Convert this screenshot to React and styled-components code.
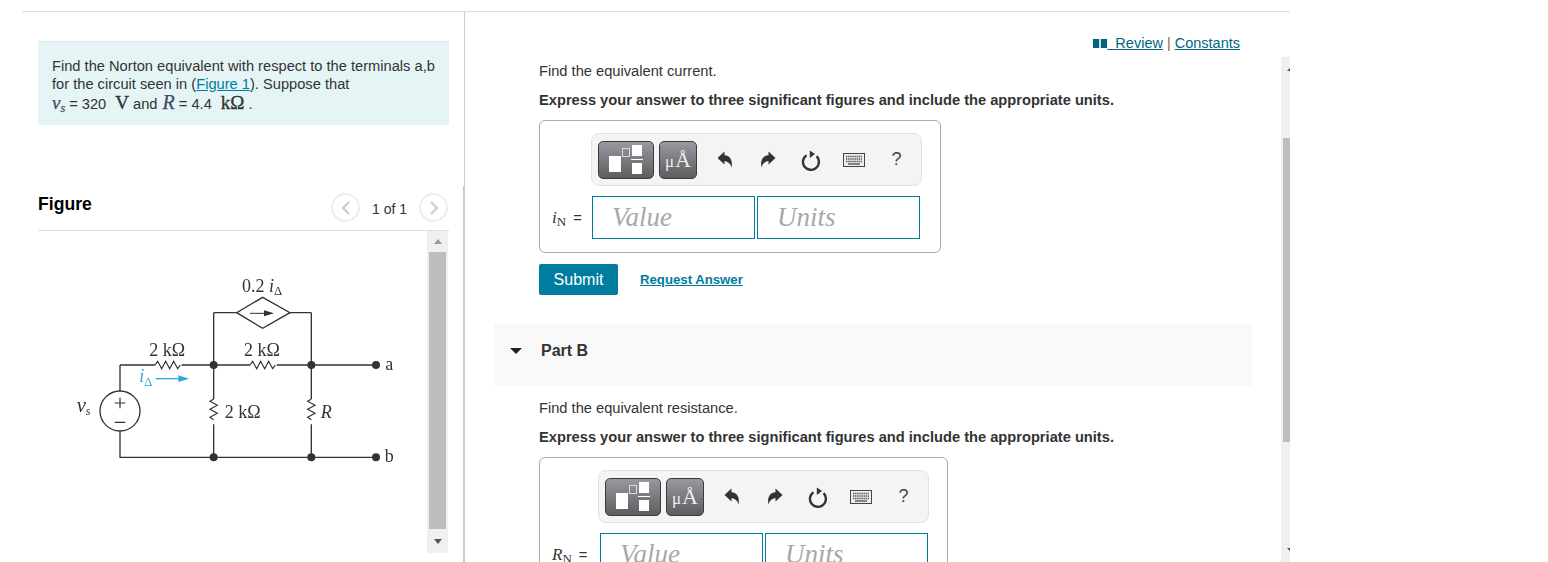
import React from "react";
import styled, { createGlobalStyle } from "styled-components";

const Global = createGlobalStyle`
  html, body { margin: 0; padding: 0; background: #fff; }
  body { font-family: "Liberation Sans", Arial, sans-serif; color: #333; font-size: 14.67px; }
`;

const Page = styled.div`
  width: 1548px; height: 562px; overflow: hidden; padding: 11px 258px 0 22px; box-sizing: border-box;
`;
const Frame = styled.div`
  display: flex; height: 551px; border-top: 1px solid #e0e0e0;
`;
const LeftColumn = styled.div`
  width: 442px; flex: none; padding: 29px 0 0 16px; box-sizing: border-box;
`;
const RightColumn = styled.div`
  flex: 1; min-width: 0; border-left: 1px solid #b9cfe3; display: flex; flex-direction: column;
`;
const Intro = styled.div`
  width: 411px; height: 84px; box-sizing: border-box; background: #e5f5f6; border-top: 1px solid #dfe6e6;
  padding: 15px 14px 0; line-height: 18px; white-space: nowrap;
`;
const TextLink = styled.a`
  color: #007c9e; text-decoration: underline;
`;
const MathI = styled.i`
  font-family: "Liberation Serif", "DejaVu Serif", serif; font-size: ${p => p.$size || 19}px; -webkit-text-stroke: 0.25px #3d4a66; color: #3d4a66; margin-left: ${p => p.$ml || 0}px;
`;
const MathR = styled.span`
  font-family: "Liberation Serif", "DejaVu Serif", serif; font-size: 19px; -webkit-text-stroke: 0.35px #333; margin: 0 4px 0 ${p => p.$ml || 9}px;
`;
const Sub = styled.sub`
  font-size: ${p => p.$size || 13}px; line-height: 0; vertical-align: -3px;
`;
const FigureSection = styled.section`
  margin-top: 61px; width: 426px; height: 376px; box-sizing: border-box; border-right: 1px solid #b9cfe3; padding-right: 15px;
`;
const FigureHeader = styled.header`
  height: 45px; box-sizing: border-box; border-bottom: 1px solid #ddd; display: flex; align-items: flex-start; padding: 7px 1px 0 0;
  margin-right: -1px;
`;
const FigureTitle = styled.h2`
  margin: 1px auto 0 0; font-size: 17.6px; line-height: 20px; font-weight: 700; color: #000;
`;
const PagerButton = styled.button`
  width: 29px; height: 29px; border-radius: 50%; border: 2px solid #eee; background: #fff; padding: 0;
  display: flex; align-items: center; justify-content: center; box-sizing: border-box;
`;
const PagerText = styled.span`
  width: 59px; text-align: center; line-height: 18px; margin-top: 7px; box-sizing: border-box; font-size: 14px;
`;
const FigureBody = styled.div`
  display: flex; justify-content: space-between; height: 322px;
`;
const CircuitSvg = styled.svg`
  width: 350px; height: 200px; margin: 34px 0 0 22px; flex: none; filter: blur(0.4px);
`;
const LeftScroll = styled.div`
  width: 21px; height: 322px; background: #f0f0f0; display: flex; flex-direction: column; align-items: center; justify-content: space-between;
  padding: 0 2px; box-sizing: border-box;
`;
const ScrollArrowBox = styled.div`
  height: ${p => p.$h}px; display: flex; align-items: center; justify-content: center;
`;
const Triangle = styled.div`
  width: 0; height: 0; border-left: 4.5px solid transparent; border-right: 4.5px solid transparent;
  ${p => p.$up ? `border-bottom: 5px solid ${p.$c};` : `border-top: 5px solid ${p.$c};`}
`;
const LeftThumb = styled.div`
  width: 17px; height: 277px; background: #bdbdbd;
`;
const ReviewRow = styled.div`
  height: 45px; box-sizing: border-box; display: flex; justify-content: flex-end; align-items: flex-start; padding: 22px 50px 0 0; line-height: 18px; font-size: 14.5px; color: #555;
`;
const ReviewLink = styled.a`
  color: #00667f; text-decoration: underline; display: inline-flex; align-items: center; white-space: pre;
`;
const ReviewSep = styled.span`
  margin: 0 4px; color: #8a6a3a;
`;
const ScrollRow = styled.div`
  flex: 1; min-height: 0; display: flex; justify-content: space-between; overflow: hidden;
`;
const Content = styled.div`
  width: 758px; margin-left: 29px; flex: none; padding-top: 5px;
`;
const RightScroll = styled.div`
  width: 9px; height: 505px; background: #f0f0f0; flex: none; display: flex; flex-direction: column; padding-left: 2px; box-sizing: border-box; position: relative;
`;
const RightThumb = styled.div`
  margin-top: 81px; width: 7px; height: 304px; background: #bdbdbd;
`;
const ClippedArrow = styled.div`
  position: absolute; right: 0; top: ${p => p.$top}px; width: 3px; height: 3px; overflow: hidden; background: #444;
  clip-path: ${p => p.$up ? "polygon(100% 0, 100% 100%, 0 100%)" : "polygon(0 0, 100% 0, 100% 100%)"};
`;
const Para = styled.p`
  margin: ${p => p.$mt || 0}px 0 0 45px; line-height: 18px;
`;
const Strong = styled(Para)`
  font-weight: 700; color: #333;
`;
const AnswerBox = styled.div`
  margin: 11px 0 0 45px; width: ${p => p.$w}px; box-sizing: border-box; border: 1px solid #aaa; border-radius: 6px;
  padding: 12px 0 13px 12px; display: grid; grid-template-columns: ${p => p.$labelW}px auto; justify-content: start; row-gap: 10px;
`;
const Toolbar = styled.div`
  grid-column: 2; margin-left: ${p => p.$shift}px; width: 331px; height: 53px; box-sizing: border-box; background: #f4f4f4; border: 1px solid #e2e2e2; border-radius: 8px;
  display: flex; align-items: center; padding: 0 0 0 6px;
`;
const DarkButton = styled.button`
  height: 38px; width: ${p => p.$w}px; margin-right: ${p => p.$mr || 0}px; padding: 0; box-sizing: border-box; border: 1px solid #3c3c3c; border-radius: 5px;
  background: linear-gradient(#9a98a0, #5d5d5f); display: flex; align-items: center; justify-content: center; flex: none;
  color: #eee; font-family: "Liberation Serif", serif; font-size: 22px;
`;
const Mu = styled.span`
  font-size: 17px; margin-top: 4px; margin-right: 1px;
`;
const IconSlot = styled.span`
  width: 43px; height: 38px; display: flex; align-items: center; justify-content: center; flex: none; color: #333; font-size: 17px;
`;
const Help = styled(IconSlot)`
  font-size: 18px; color: #444;
`;
const Label = styled.div`
  font-family: "Liberation Serif", serif; font-size: 17px; align-self: center; color: #333; white-space: nowrap;
`;
const LabelEq = styled.span`
  font-family: "Liberation Sans", sans-serif; font-size: 14.67px; margin-left: 7px;
`;
const Inputs = styled.div`
  display: flex; gap: 2px;
`;
const Field = styled.div`
  width: 163px; height: 43px; box-sizing: border-box; border: 1px solid #007c9e; padding-left: 19px;
  font-family: "Liberation Serif", serif; font-style: italic; font-size: 27px; line-height: 41px; color: #a8a8a8;
`;
const Actions = styled.div`
  margin: 11px 0 0 45px; display: flex; align-items: center;
`;
const Submit = styled.button`
  width: 79px; height: 31px; border: 0; border-radius: 2px; background: #007c9e; color: #fff; font: 16px "Liberation Sans", sans-serif; padding: 0;
`;
const RequestLink = styled.a`
  margin-left: 22px; color: #007c9e; font-weight: 700; font-size: 13.2px; text-decoration: underline;
`;
const PartBand = styled.div`
  margin-top: 29px; height: 62px; background: #f9f9f9; display: flex; align-items: center; padding: 0 0 8px 16px; box-sizing: border-box;
`;
const PartCaret = styled.div`
  width: 0; height: 0; border-left: 6px solid transparent; border-right: 6px solid transparent; border-top: 6px solid #222; margin-right: 19px;
`;
const PartTitle = styled.h3`
  margin: 0; font-size: 16px; font-weight: 700; color: #333;
`;

const Chevron = ({ left, color }) => (
  <svg width="10" height="16" viewBox="0 0 10 16">
    <path d={left ? "M8 2 L2 8 L8 14" : "M2 2 L8 8 L2 14"} fill="none" stroke={color} strokeWidth="2" />
  </svg>
);

const TemplateIcon = () => (
  <svg width="36" height="30" viewBox="0 0 36 30">
    <rect x="1" y="11" width="12" height="16" fill="#fff" />
    <rect x="14.5" y="3.5" width="7" height="8" fill="none" stroke="#ddd" />
    <rect x="24" y="0" width="10" height="11" fill="#fff" />
    <rect x="23" y="14" width="12" height="1" fill="#fff" />
    <rect x="24" y="18" width="10" height="11" fill="#fff" />
  </svg>
);

const UndoIcon = ({ flip }) => (
  <svg width="16" height="17" viewBox="0 0 16 17" style={flip ? { transform: "scaleX(-1)" } : undefined}>
    <path d="M0.5 7 L7.5 0.5 V4.2 C13 4.5 16 9 14.5 16.5 C13.5 12.5 11 10.5 7.5 10 V13.5 Z" fill="#333" />
  </svg>
);

const ResetIcon = () => (
  <svg width="20" height="22" viewBox="0 0 20 22">
    <path d="M15.6 7.2 A8 8 0 1 1 5.5 6.2" fill="none" stroke="#333" strokeWidth="2.4" />
    <path d="M8.8 1.5 L8.8 9 L14 5 Z" fill="#333" />
  </svg>
);

const KeyboardIcon = () => (
  <svg width="22" height="14" viewBox="0 0 22 14">
    <rect x="0.5" y="0.5" width="21" height="13" fill="#eee" stroke="#444" />
    <path d="M3 3.5h16M3 6h16M3 8.5h16" stroke="#555" strokeWidth="1.4" strokeDasharray="1.4 .7" />
    <path d="M5 11h12" stroke="#555" strokeWidth="1.4" />
  </svg>
);

const BookIcon = () => (
  <svg width="14" height="11" viewBox="0 0 14 11">
    <path d="M0 1h6.2v9H0z M7.8 1H14v9H7.8z" fill="#00667f" />
  </svg>
);

const Resistor = ({ x, y, vertical }) => {
  const pts = vertical
    ? `M${x} ${y} l-11 7 l22 12 l-22 12 l22 12 l-22 12 l11 7`
    : `M${x} ${y} l8 -11 l12 22 l12 -22 l12 22 l12 -22 l12 22 l8 -11`;
  return <path d={pts} fill="none" stroke="#333" strokeWidth="3.5" />;
};

const T = styled.text`
  font-family: "Liberation Serif", serif; font-size: ${p => p.$size || 54}px; fill: #333;
`;

const Circuit = () => (
  <CircuitSvg viewBox="0 0 1050 600">
    <path d="M180 300 H285 M365 300 H570 M650 300 H948 M180 300 V378 M180 498 V577 H948 M461 143 V300 V402 M461 478 V577 M754 143 V300 V402 M754 478 V577 M461 143 H530 M690 143 H754" fill="none" stroke="#333" strokeWidth="4" />
    <Resistor x={285} y={300} />
    <Resistor x={570} y={300} />
    <Resistor x={461} y={402} vertical />
    <Resistor x={754} y={402} vertical />
    <path d="M608 97 L690 143 L608 190 L530 143 Z" fill="#fff" stroke="#333" strokeWidth="4" />
    <path d="M570 145 H620" stroke="#333" strokeWidth="3" />
    <path d="M612 136 L642 145 L612 154 Z" fill="#333" />
    <circle cx="180" cy="438" r="60" fill="#fff" stroke="#333" strokeWidth="4" />
    <path d="M164 414 H196 M180 398 V430 M164 472 H196" stroke="#333" strokeWidth="3.5" />
    <path d="M287 341 H360" stroke="#2ba8e0" strokeWidth="4" />
    <path d="M355 331 L387 341 L355 351 Z" fill="#2ba8e0" />
    {[[461, 300], [754, 300], [948, 300], [461, 577], [754, 577], [948, 577]].map(([cx, cy]) => (
      <circle key={cx + "-" + cy} cx={cx} cy={cy} r="12" fill="#333" />
    ))}
    <T x="546" y="81">0.2 <tspan fontStyle="italic">i</tspan><tspan fontSize="38" dy="8">Δ</tspan></T>
    <T x="268" y="272">2 kΩ</T>
    <T x="552" y="272">2 kΩ</T>
    <T x="494" y="458">2 kΩ</T>
    <T x="782" y="458" fontStyle="italic">R</T>
    <T x="976" y="314">a</T>
    <T x="974" y="590">b</T>
    <T x="50" y="442" fontStyle="italic" $size={62}>v<tspan fontSize="36" dy="8">s</tspan></T>
    <T x="238" y="352" fontStyle="italic" style={{ fill: "#2ba8e0" }}>i<tspan fontSize="38" dy="10" fontStyle="normal">Δ</tspan></T>
  </CircuitSvg>
);

const Answer = ({ symbol, sub, width, labelW, shift }) => (
  <AnswerBox $w={width} $labelW={labelW}>
    <Toolbar $shift={shift}>
      <DarkButton $w={56} $mr={5}><TemplateIcon /></DarkButton>
      <DarkButton $w={38} $mr={6}><Mu>μ</Mu>Å</DarkButton>
      <IconSlot><UndoIcon /></IconSlot>
      <IconSlot><UndoIcon flip /></IconSlot>
      <IconSlot><ResetIcon /></IconSlot>
      <IconSlot><KeyboardIcon /></IconSlot>
      <Help>?</Help>
    </Toolbar>
    <Label>
      <i>{symbol}</i><Sub>{sub}</Sub><LabelEq>=</LabelEq>
    </Label>
    <Inputs>
      <Field>Value</Field>
      <Field>Units</Field>
    </Inputs>
  </AnswerBox>
);

export default function App() {
  return (
    <Page>
      <Global />
      <Frame>
        <LeftColumn>
          <Intro>
            Find the Norton equivalent with respect to the terminals a,b<br />
            for the circuit seen in (<TextLink>Figure 1</TextLink>). Suppose that<br />
            <MathI>v<Sub $size={12}>s</Sub></MathI> = 320<MathR>V</MathR>and <MathI $size={20} $ml={1}>R</MathI> = 4.4<MathR $ml={9}>kΩ</MathR>.
          </Intro>
          <FigureSection>
            <FigureHeader>
              <FigureTitle>Figure</FigureTitle>
              <PagerButton><Chevron left color="#c8c8c8" /></PagerButton>
              <PagerText>1 of 1</PagerText>
              <PagerButton><Chevron color="#c8c8c8" /></PagerButton>
            </FigureHeader>
            <FigureBody>
              <Circuit />
              <LeftScroll>
                <ScrollArrowBox $h={21}><Triangle $up $c="#999" /></ScrollArrowBox>
                <LeftThumb />
                <ScrollArrowBox $h={24}><Triangle $c="#555" /></ScrollArrowBox>
              </LeftScroll>
            </FigureBody>
          </FigureSection>
        </LeftColumn>
        <RightColumn>
          <ReviewRow>
            <ReviewLink><BookIcon />{"  Review"}</ReviewLink>
            <ReviewSep>|</ReviewSep>
            <ReviewLink>Constants</ReviewLink>
          </ReviewRow>
          <ScrollRow>
            <Content>
              <Para>Find the equivalent current.</Para>
              <Strong $mt={11}>Express your answer to three significant figures and include the appropriate units.</Strong>
              <Answer symbol="i" sub="N" width={402} labelW={40} shift={-1} />
              <Actions>
                <Submit>Submit</Submit>
                <RequestLink>Request Answer</RequestLink>
              </Actions>
              <PartBand>
                <PartCaret />
                <PartTitle>Part B</PartTitle>
              </PartBand>
              <Para $mt={13}>Find the equivalent resistance.</Para>
              <Strong $mt={11}>Express your answer to three significant figures and include the appropriate units.</Strong>
              <Answer symbol="R" sub="N" width={409} labelW={48} shift={-2} />
            </Content>
            <RightScroll>
              <ClippedArrow $up $top={11} />
              <RightThumb />
              <ClippedArrow $top={491} />
            </RightScroll>
          </ScrollRow>
        </RightColumn>
      </Frame>
    </Page>
  );
}
